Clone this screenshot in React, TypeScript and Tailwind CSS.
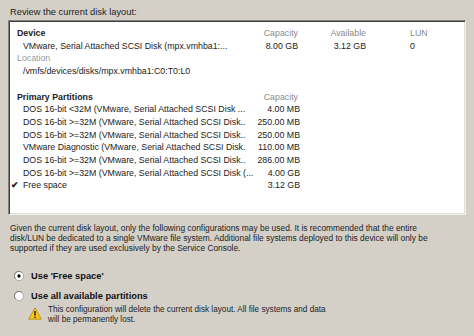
import React from 'react';

interface Partition {
  name: string;
  capacity: string;
  checked?: boolean;
}

const partitions: Partition[] = [
  { name: 'DOS 16-bit <32M (VMware, Serial Attached SCSI Disk ...', capacity: '4.00 MB' },
  { name: 'DOS 16-bit >=32M (VMware, Serial Attached SCSI Disk..', capacity: '250.00 MB' },
  { name: 'DOS 16-bit >=32M (VMware, Serial Attached SCSI Disk..', capacity: '250.00 MB' },
  { name: 'VMware Diagnostic (VMware, Serial Attached SCSI Disk.', capacity: '110.00 MB' },
  { name: 'DOS 16-bit >=32M (VMware, Serial Attached SCSI Disk..', capacity: '286.00 MB' },
  { name: 'DOS 16-bit >=32M (VMware, Serial Attached SCSI Disk (...', capacity: '4.00 GB' },
  { name: 'Free space', capacity: '3.12 GB', checked: true },
];

/** 클래식 윈도우 라디오 버튼 */
const Radio: React.FC<{ checked?: boolean }> = ({ checked }) => (
  <svg width="10" height="10" viewBox="0 0 12 12" className="shrink-0">
    <circle cx="6" cy="6" r="5.5" fill="#ffffff" stroke="#a0a0a0" />
    <path d="M2 9.5 A5 5 0 0 1 9.5 2" fill="none" stroke="#707070" strokeWidth="1" />
    {checked && <circle cx="6" cy="6" r="2" fill="#000000" />}
  </svg>
);

const WarningIcon: React.FC = () => (
  <svg width="14" height="13" viewBox="0 0 14 13" className="shrink-0">
    <path d="M7 0.8 L13.4 12.2 L0.6 12.2 Z" fill="#f5c518" stroke="#b58a10" strokeWidth="0.8" strokeLinejoin="round" />
    <rect x="6.3" y="4" width="1.4" height="4.6" fill="#222" />
    <rect x="6.3" y="9.6" width="1.4" height="1.4" fill="#222" />
  </svg>
);

export default function App() {
  return (
    <div className="w-[474px] h-[336px] overflow-hidden bg-[#d4d0c8] font-['Tahoma','Liberation_Sans',sans-serif] text-[#000] pt-[6px]">
      <div className="pl-[10px] text-[9.3px] leading-[12px] text-[#222]">Review the current disk layout:</div>

      {/* 디스크 레이아웃 목록 */}
      <div className="ml-[8px] mt-[2px] w-[458px] h-[195px] bg-white border border-t-[#808080] border-l-[#808080] border-r-[#f4f2ee] border-b-[#f4f2ee] shadow-[inset_1px_1px_0_#404040,inset_-1px_-1px_0_#e0ded8] pt-[6px] text-[8.8px] leading-[12.7px] text-[#222]">
        <div className="flex">
          <div className="w-[242px] pl-[8px] font-bold">Device</div>
          <div className="w-[47px] text-right text-[#8a8a8a]">Capacity</div>
          <div className="w-[68px] text-right text-[#8a8a8a]">Available</div>
          <div className="ml-[44px] text-[#8a8a8a]">LUN</div>
        </div>
        <div className="flex">
          <div className="w-[242px] pl-[14px] whitespace-nowrap">VMware, Serial Attached SCSI Disk (mpx.vmhba1:...</div>
          <div className="w-[47px] text-right">8.00 GB</div>
          <div className="w-[68px] text-right">3.12 GB</div>
          <div className="ml-[44px]">0</div>
        </div>
        <div className="pl-[8px] text-[#9a9a9a]">Location</div>
        <div className="pl-[14px]">/vmfs/devices/disks/mpx.vmhba1:C0:T0:L0</div>
        <div className="h-[12.7px]" />
        <div className="flex">
          <div className="w-[242px] pl-[8px] font-bold">Primary Partitions</div>
          <div className="w-[47px] text-right text-[#8a8a8a]">Capacity</div>
        </div>
        {partitions.map((p, i) => (
          <div key={i} className="flex">
            <div className="w-[242px] pl-[14px] whitespace-nowrap relative">
              {p.checked && <span className="absolute left-[2px] top-0 text-[9px] font-bold">✔</span>}
              {p.name}
            </div>
            <div className="w-[49px] text-right">{p.capacity}</div>
          </div>
        ))}
      </div>

      <p className="pl-[10px] mt-[8px] text-[8.4px] leading-[10px] text-[#222] whitespace-nowrap">
        Given the current disk layout, only the following configurations may be used. It is recommended that the entire
        <br />
        disk/LUN be dedicated to a single VMware file system. Additional file systems deployed to this device will only be
        <br />
        supported if they are used exclusively by the Service Console.
      </p>

      {/* 구성 선택 */}
      <div className="mt-[17px] pl-[14px] flex flex-col text-[9.3px] leading-[12px] text-[#111]">
        <label className="flex items-center gap-[7px]">
          <Radio checked />
          <span className="font-bold">Use 'Free space'</span>
        </label>
        <label className="flex items-center gap-[7px] mt-[8px]">
          <Radio />
          <span className="font-bold">Use all available partitions</span>
        </label>
        <div className="flex items-start gap-[6px] pl-[14px] mt-[3px]">
          <div className="pt-[2px]"><WarningIcon /></div>
          <div className="text-[8.2px] leading-[10px] text-[#222]">
            This configuration will delete the current disk layout. All file systems and data
            <br />
            will be permanently lost.
          </div>
        </div>
      </div>
    </div>
  );
}
